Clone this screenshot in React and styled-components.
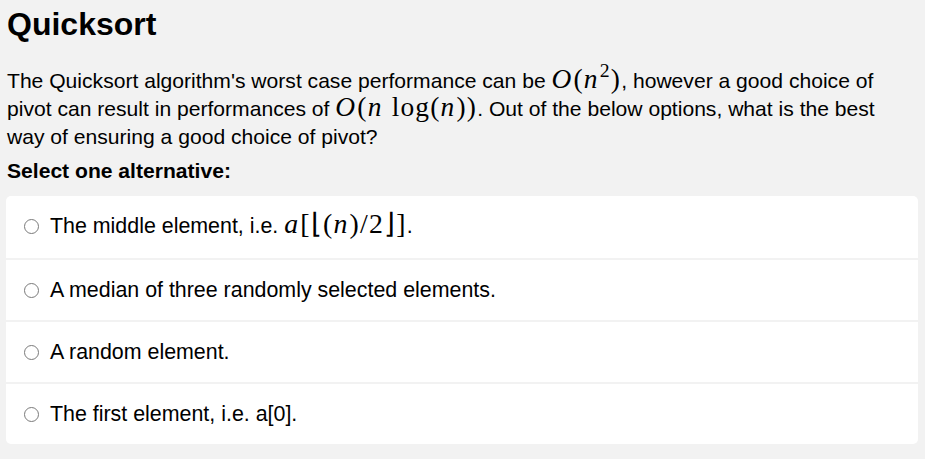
import React from "react";
import styled, { createGlobalStyle } from "styled-components";

const GlobalStyle = createGlobalStyle`
  html, body {
    margin: 0;
    padding: 0;
    background: #f2f2f2;
  }
  body {
    font-family: "Liberation Sans", Arial, sans-serif;
    color: #000;
  }
`;

const Page = styled.div`
  padding: 8px 7px 16px 6px;
`;

const Title = styled.h1`
  margin: 0 0 0 1px;
  font-size: 32px;
  line-height: 32px;
  font-weight: bold;
`;

const Question = styled.p`
  margin: 27px 0 0 1px;
  font-size: 21.1px;
  line-height: 28px;
`;

const Prompt = styled.div`
  margin: 6px 0 0 1px;
  font-size: 21.1px;
  line-height: 28px;
  font-weight: bold;
`;

const Card = styled.div`
  margin-top: 11px;
  display: flex;
  flex-direction: column;
  gap: 2px;
  border-radius: 5px;
  overflow: hidden;
`;

const Option = styled.label`
  display: flex;
  align-items: center;
  height: ${(p) => (p.$tall ? "62px" : "60px")};
  padding-left: 18px;
  padding-bottom: ${(p) => (p.$tall ? "2px" : "0")};
  box-sizing: border-box;
  background: #fff;
  font-size: 21.4px;
  line-height: 28px;
  cursor: pointer;
`;

const Radio = styled.span`
  flex: none;
  width: 13px;
  height: 13px;
  margin-right: 11px;
  border: 1px solid #7a7a7a;
  border-radius: 50%;
  background: #fff;
`;

const Math = styled.span`
  font-family: "Liberation Serif", "Times New Roman", serif;
  font-size: 1.3em;
  line-height: 0;
  letter-spacing: 1.2px;
  white-space: nowrap;
`;

const V = styled.i`
  font-style: italic;
  padding-right: 1px;
`;

const Sup = styled.sup`
  font-size: 0.72em;
  line-height: 0;
  vertical-align: 0.55em;
`;

const options = [
  {
    tall: true,
    label: (
      <>
        The middle element, i.e.{" "}
        <Math>
          <V>a</V>[⌊(<V>n</V>)/2⌋]
        </Math>
        .
      </>
    ),
  },
  { label: "A median of three randomly selected elements." },
  { label: "A random element." },
  { label: "The first element, i.e. a[0]." },
];

export default function App() {
  return (
    <>
      <GlobalStyle />
      <Page>
        <Title>Quicksort</Title>
        <Question>
          The Quicksort algorithm's worst case performance can be{" "}
          <Math>
            <V>O</V>(<V>n</V>
            <Sup>2</Sup>)
          </Math>
          , however a good choice of pivot can result in performances of{" "}
          <Math>
            <V>O</V>(<V>n</V> log(<V>n</V>))
          </Math>
          . Out of the below options, what is the best way of ensuring a good
          choice of pivot?
        </Question>
        <Prompt>Select one alternative:</Prompt>
        <Card>
          {options.map((o, i) => (
            <Option key={i} $tall={o.tall}>
              <Radio />
              <span>{o.label}</span>
            </Option>
          ))}
        </Card>
      </Page>
    </>
  );
}
